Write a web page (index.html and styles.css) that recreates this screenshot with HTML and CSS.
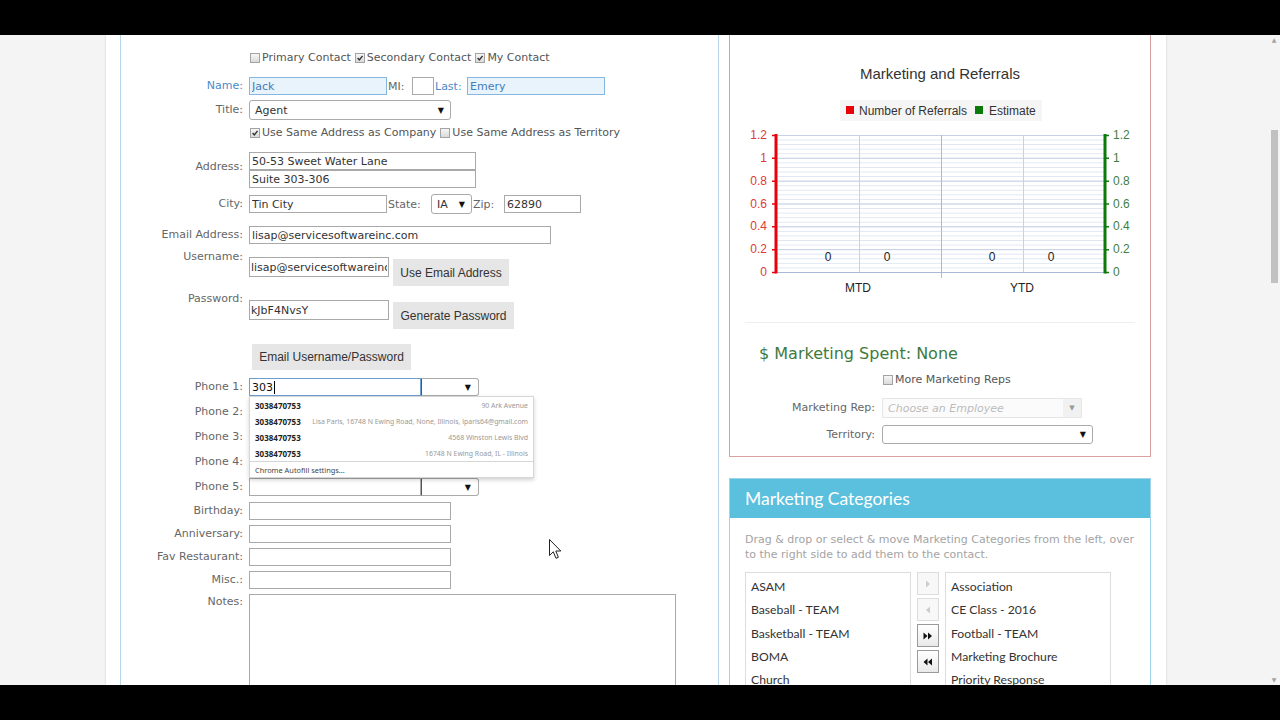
FILE: index.html
```html
<!DOCTYPE html>
<html lang="en">
<head>
    <meta charset="UTF-8">
    <meta name="viewport" content="width=device-width, initial-scale=1.0">
    <title>Edit Contact</title>
    <link rel="stylesheet" href="styles.css">
</head>
<body>
<div class="screen">
    <div class="page">
        <div class="container">
            <div class="columns">

                <!-- contact form -->
                <div class="contact-panel">
                    <div class="row">
                        <span class="lbl"></span>
                        <label class="chk"><span class="box"></span>Primary Contact</label>
                        <label class="chk"><span class="box"><svg viewBox="0 0 10 10"><path d="M2 5 L4.2 7.4 L8.2 2.4"/></svg></span>Secondary Contact</label>
                        <label class="chk"><span class="box"><svg viewBox="0 0 10 10"><path d="M2 5 L4.2 7.4 L8.2 2.4"/></svg></span>My Contact</label>
                    </div>
                    <div class="row gap12">
                        <span class="lbl blue">Name:</span>
                        <input class="inp inp-hl name-inp" value="Jack">
                        <span class="mi-lbl">MI:</span>
                        <input class="inp mi-inp" value="">
                        <span class="last-lbl blue">Last:</span>
                        <input class="inp inp-hl name-inp" value="Emery">
                    </div>
                    <div class="row gap5">
                        <span class="lbl">Title:</span>
                        <div class="sel title-sel"><span>Agent</span><span class="caret">▼</span></div>
                    </div>
                    <div class="row gap6">
                        <span class="lbl"></span>
                        <label class="chk"><span class="box"><svg viewBox="0 0 10 10"><path d="M2 5 L4.2 7.4 L8.2 2.4"/></svg></span>Use Same Address as Company</label>
                        <label class="chk"><span class="box"></span>Use Same Address as Territory</label>
                    </div>
                    <div class="row gap12">
                        <span class="lbl addr-lbl">Address:</span>
                        <div class="stack">
                            <input class="inp addr-inp" value="50-53 Sweet Water Lane">
                            <input class="inp addr-inp" value="Suite 303-306">
                        </div>
                    </div>
                    <div class="row gap6">
                        <span class="lbl">City:</span>
                        <input class="inp city-inp" value="Tin City">
                        <span class="state-lbl">State:</span>
                        <div class="sel state-sel"><span>IA</span><span class="caret">▼</span></div>
                        <span class="zip-lbl">Zip:</span>
                        <input class="inp zip-inp" value="62890">
                    </div>
                    <div class="row gap12">
                        <span class="lbl">Email Address:</span>
                        <input class="inp email-inp" value="lisap@servicesoftwareinc.com">
                    </div>
                    <div class="row top gap6">
                        <span class="lbl">Username:</span>
                        <input class="inp user-inp" value="lisap@servicesoftwareinc.com">
                        <button class="btn user-btn">Use Email Address</button>
                    </div>
                    <div class="row top gap6">
                        <span class="lbl">Password:</span>
                        <input class="inp user-inp pass-inp" value="kJbF4NvsY">
                        <button class="btn pass-btn">Generate Password</button>
                    </div>
                    <div class="row gap15">
                        <span class="lbl"></span>
                        <button class="btn send-btn">Email Username/Password</button>
                    </div>

                    <div class="row gap8">
                        <span class="lbl">Phone 1:</span>
                        <div class="phone-field">
                            <div class="inp phone-inp focused">303<span class="text-caret"></span></div>
                            <div class="sel phone-sel"><span class="caret">▼</span></div>
                            <div class="autofill">
                                <div class="af-item"><b>3038470753</b><span>90 Ark Avenue</span></div>
                                <div class="af-item"><b>3038470753</b><span>Lisa Paris, 16748 N Ewing Road, None, Illinois, lparis64@gmail.com</span></div>
                                <div class="af-item"><b>3038470753</b><span>4568 Winston Lewis Blvd</span></div>
                                <div class="af-item"><b>3038470753</b><span>16748 N Ewing Road, IL - Illinois</span></div>
                                <div class="af-settings">Chrome Autofill settings...</div>
                            </div>
                        </div>
                    </div>
                    <div class="row gap7">
                        <span class="lbl">Phone 2:</span>
                        <div class="phone-field">
                            <input class="inp phone-inp" value="">
                            <div class="sel phone-sel"></div>
                        </div>
                    </div>
                    <div class="row gap7">
                        <span class="lbl">Phone 3:</span>
                        <div class="phone-field">
                            <input class="inp phone-inp" value="">
                            <div class="sel phone-sel"></div>
                        </div>
                    </div>
                    <div class="row gap7">
                        <span class="lbl">Phone 4:</span>
                        <div class="phone-field">
                            <input class="inp phone-inp" value="">
                            <div class="sel phone-sel"></div>
                        </div>
                    </div>
                    <div class="row gap7">
                        <span class="lbl">Phone 5:</span>
                        <div class="phone-field">
                            <input class="inp phone-inp" value="">
                            <div class="sel phone-sel"><span class="caret">▼</span></div>
                        </div>
                    </div>

                    <div class="row gap6">
                        <span class="lbl">Birthday:</span>
                        <input class="inp misc-inp" value="">
                    </div>
                    <div class="row gap5">
                        <span class="lbl">Anniversary:</span>
                        <input class="inp misc-inp" value="">
                    </div>
                    <div class="row gap5">
                        <span class="lbl">Fav Restaurant:</span>
                        <input class="inp misc-inp" value="">
                    </div>
                    <div class="row gap5">
                        <span class="lbl">Misc.:</span>
                        <input class="inp misc-inp" value="">
                    </div>
                    <div class="row top gap5">
                        <span class="lbl notes-lbl">Notes:</span>
                        <textarea class="inp notes"></textarea>
                    </div>
                </div>

                <!-- right column -->
                <div class="side">
                    <div class="chart-panel">
                        <svg class="chart" width="420" height="265" viewBox="0 0 420 265">
                            <defs>
                                <pattern id="minor-grid" x="47" y="90" width="327" height="4.5667" patternUnits="userSpaceOnUse">
                                    <line x1="0" y1="0.5" x2="327" y2="0.5" stroke="#dfe6f2" stroke-width="1"/>
                                </pattern>
                            </defs>
                            <text x="210" y="34" text-anchor="middle" class="chart-title">Marketing and Referrals</text>

                            <rect x="110" y="55" width="202" height="21" fill="#f5f5f5"/>
                            <rect x="116" y="61" width="8" height="8" fill="#e8000b"/>
                            <text x="129" y="70" class="chart-txt">Number of Referrals</text>
                            <rect x="245" y="61" width="8" height="8" fill="#0b7a0b"/>
                            <text x="259" y="70" class="chart-txt">Estimate</text>

                            <rect x="47" y="90" width="327" height="137" fill="url(#minor-grid)"/>
                            <g stroke="#c6d1e6" stroke-width="1">
                                <line x1="47" y1="90.5" x2="374" y2="90.5"/>
                                <line x1="47" y1="113.3" x2="374" y2="113.3"/>
                                <line x1="47" y1="136.2" x2="374" y2="136.2"/>
                                <line x1="47" y1="159" x2="374" y2="159"/>
                                <line x1="47" y1="181.8" x2="374" y2="181.8"/>
                                <line x1="47" y1="204.7" x2="374" y2="204.7"/>
                                <line x1="129.5" y1="90" x2="129.5" y2="227"/>
                                <line x1="293.5" y1="90" x2="293.5" y2="227"/>
                            </g>
                            <g stroke="#a9b8d8" stroke-width="1">
                                <line x1="211.5" y1="90" x2="211.5" y2="233"/>
                                <line x1="47" y1="227.5" x2="374" y2="227.5"/>
                            </g>

                            <g stroke="#e8000b">
                                <line x1="46" y1="89" x2="46" y2="228.5" stroke-width="3"/>
                                <path d="M42 90.5h4M42 113.3h4M42 136.2h4M42 159h4M42 181.8h4M42 204.7h4M42 227.5h4" stroke-width="1.5"/>
                            </g>
                            <g stroke="#0b7a0b">
                                <line x1="375" y1="89" x2="375" y2="228.5" stroke-width="3"/>
                                <path d="M375 90.5h4M375 113.3h4M375 136.2h4M375 159h4M375 181.8h4M375 204.7h4M375 227.5h4" stroke-width="1.5"/>
                            </g>

                            <g class="axis-red" text-anchor="end">
                                <text x="37" y="94">1.2</text>
                                <text x="37" y="117">1</text>
                                <text x="37" y="140">0.8</text>
                                <text x="37" y="163">0.6</text>
                                <text x="37" y="185">0.4</text>
                                <text x="37" y="208">0.2</text>
                                <text x="37" y="231">0</text>
                            </g>
                            <g class="axis-green">
                                <text x="383" y="94">1.2</text>
                                <text x="383" y="117">1</text>
                                <text x="383" y="140">0.8</text>
                                <text x="383" y="163">0.6</text>
                                <text x="383" y="185">0.4</text>
                                <text x="383" y="208">0.2</text>
                                <text x="383" y="231">0</text>
                            </g>

                            <g class="chart-val" text-anchor="middle">
                                <text x="98" y="216">0</text>
                                <text x="157" y="216">0</text>
                                <text x="262" y="216">0</text>
                                <text x="321" y="216">0</text>
                                <text x="128" y="247">MTD</text>
                                <text x="292" y="247">YTD</text>
                            </g>
                        </svg>

                        <hr class="divider">
                        <div class="spent">$ Marketing Spent: None</div>

                        <div class="row rep-chk">
                            <span class="lbl side-lbl"></span>
                            <label class="chk"><span class="box"></span>More Marketing Reps</label>
                        </div>
                        <div class="row rep-row">
                            <span class="lbl side-lbl">Marketing Rep:</span>
                            <div class="sel rep-sel disabled"><span>Choose an Employee</span><span class="rep-arrow">▼</span></div>
                        </div>
                        <div class="row terr-row">
                            <span class="lbl side-lbl">Territory:</span>
                            <div class="sel terr-sel"><span></span><span class="caret">▼</span></div>
                        </div>
                    </div>

                    <div class="cat-panel">
                        <div class="cat-head">Marketing Categories</div>
                        <div class="cat-body">
                            <p class="cat-help">Drag &amp; drop or select &amp; move Marketing Categories from the left, over to the right side to add them to the contact.</p>
                            <div class="picker">
                                <div class="list">
                                    <div>ASAM</div>
                                    <div>Baseball - TEAM</div>
                                    <div>Basketball - TEAM</div>
                                    <div>BOMA</div>
                                    <div>Church</div>
                                </div>
                                <div class="mv-btns">
                                    <span class="mv"><svg width="6" height="8" viewBox="0 0 6 8"><path d="M1 0.5 L5 4 L1 7.5Z"/></svg></span>
                                    <span class="mv"><svg width="6" height="8" viewBox="0 0 6 8"><path d="M5 0.5 L1 4 L5 7.5Z"/></svg></span>
                                    <span class="mv on"><svg width="10" height="8" viewBox="0 0 10 8"><path d="M0.5 0.5 L4.5 4 L0.5 7.5Z M5 0.5 L9 4 L5 7.5Z"/></svg></span>
                                    <span class="mv on"><svg width="10" height="8" viewBox="0 0 10 8"><path d="M4.5 0.5 L0.5 4 L4.5 7.5Z M9 0.5 L5 4 L9 7.5Z"/></svg></span>
                                </div>
                                <div class="list">
                                    <div>Association</div>
                                    <div>CE Class - 2016</div>
                                    <div>Football - TEAM</div>
                                    <div>Marketing Brochure</div>
                                    <div>Priority Response</div>
                                </div>
                            </div>
                        </div>
                    </div>
                </div>

            </div>
        </div>
    </div>
    <div class="scrollbar">
        <span class="sb-arrow">▲</span>
        <span class="sb-thumb"></span>
        <span class="sb-fill"></span>
        <span class="sb-arrow">▼</span>
    </div>
    <svg class="cursor" width="13" height="21" viewBox="0 0 13 21"><path d="M0.5 0.5 L0.5 16.5 L4.3 12.8 L7 19.3 L9.4 18.3 L6.8 12 L11.8 12 Z" fill="#fff" stroke="#222" stroke-width="1"/></svg>
</div>
</body>
</html>
```

FILE: styles.css
```css
body {
    margin: 0;
    background-color: #000;
    font-family: "DejaVu Sans", Verdana, sans-serif;
    font-size: 11px;
    color: #666;
}
.screen {
    margin-top: 35px;
    height: 650px;
    display: flex;
    background-color: #f4f4f4;
    overflow: hidden;
    position: relative;
}
.page {
    flex: 1;
    overflow: hidden;
}
.container {
    display: flow-root;
    width: 1060px;
    height: 100%;
    margin-left: 106px;
    padding: 0 15px 0 14px;
    box-sizing: border-box;
    background-color: #fff;
    box-shadow: 0 0 2px rgba(0, 0, 0, 0.18);
}
.columns {
    display: flex;
    align-items: flex-start;
    gap: 10px;
    margin-top: -20px;
}

/* left form */
.contact-panel {
    width: 599px;
    height: 820px;
    box-sizing: border-box;
    border: 1px solid #b7d6ec;
    padding-top: 35px;
}
.row {
    display: flex;
    align-items: center;
}
.row.top {
    align-items: flex-start;
}
.gap5 { margin-top: 5px; }
.gap6 { margin-top: 6px; }
.gap7 { margin-top: 7px; }
.gap8 { margin-top: 8px; }
.gap12 { margin-top: 12px; }
.gap15 { margin-top: 15px; }
.lbl {
    flex: none;
    width: 122px;
    margin-right: 6px;
    text-align: right;
    line-height: 14px;
}
.blue {
    color: #4a8bc9;
}
.addr-lbl {
    padding-bottom: 6px;
}
.notes-lbl {
    margin-top: 1px;
}
.chk {
    display: inline-flex;
    align-items: center;
    line-height: 14px;
    color: #555;
    margin-right: 4px;
}
.chk:first-of-type {
    margin-left: 1px;
}
.box {
    width: 10px;
    height: 10px;
    box-sizing: border-box;
    border: 1px solid #a3a3a3;
    background: linear-gradient(#f6f6f6, #dadada);
    margin-right: 2px;
    display: inline-flex;
}
.box svg {
    width: 8px;
    height: 8px;
    fill: none;
    stroke: #333;
    stroke-width: 1.8;
}
.inp {
    height: 18px;
    margin: 0;
    padding: 0 2px;
    box-sizing: border-box;
    border: 1px solid #a9a9a9;
    background-color: #fff;
    font-family: inherit;
    font-size: 11px;
    color: #333;
    outline: none;
}
.inp-hl {
    background-color: #e9f3fc;
    border-color: #86b7e0;
    color: #3f7dbd;
}
.name-inp { width: 138px; }
.mi-lbl {
    width: 24px;
    margin-left: 1px;
}
.mi-inp { width: 22px; }
.last-lbl {
    width: 32px;
    padding-left: 1px;
}
.addr-inp { width: 227px; }
.stack {
    display: flex;
    flex-direction: column;
}
.city-inp { width: 138px; }
.state-lbl {
    width: 43px;
    margin-left: 1px;
}
.zip-lbl {
    width: 31px;
    margin-left: 1px;
}
.zip-inp { width: 77px; }
.email-inp { width: 302px; }
.user-inp {
    width: 140px;
    height: 20px;
    margin-top: 7px;
    padding: 0 1px;
}
.pass-inp {
    margin-top: 8px;
}
.sel {
    display: flex;
    align-items: center;
    justify-content: space-between;
    height: 20px;
    box-sizing: border-box;
    border: 1px solid #aaa;
    border-radius: 3px;
    padding: 0 6px 0 5px;
    background-color: #fff;
    color: #333;
}
.caret {
    font-size: 8px;
    color: #111;
}
.title-sel { width: 202px; }
.state-sel { width: 41px; }

.btn {
    font-family: "Liberation Sans", Arial, sans-serif;
    font-size: 12px;
    color: #333;
    background-color: #e6e6e6;
    border: none;
    height: 27px;
    padding: 0 7px;
    margin: 0;
}
.user-btn {
    margin: 9px 0 0 4px;
    width: 116px;
}
.pass-btn {
    margin: 10px 0 0 4px;
    width: 121px;
}
.send-btn {
    height: 26px;
    width: 159px;
    margin-left: 3px;
}

.phone-field {
    display: flex;
    position: relative;
}
.phone-inp {
    width: 172px;
    display: flex;
    align-items: center;
}
.focused {
    border-color: #6d9fd3;
    color: #111;
}
.text-caret {
    width: 1px;
    height: 13px;
    background-color: #000;
    margin-left: 1px;
}
.phone-sel {
    width: 58px;
    height: 18px;
    border-radius: 0 3px 3px 0;
    border-left-color: #555;
    justify-content: flex-end;
    padding-right: 7px;
}
.autofill {
    position: absolute;
    top: 18px;
    left: 0;
    width: 285px;
    height: 82px;
    box-sizing: border-box;
    background-color: #fff;
    border: 1px solid #d6d6d6;
    box-shadow: 0 2px 4px rgba(0, 0, 0, 0.18);
    font-family: "Noto Sans", sans-serif;
    z-index: 10;
}
.af-item {
    height: 16px;
    display: flex;
    align-items: center;
    justify-content: space-between;
    padding: 0 5px;
}
.af-item b {
    font-size: 8px;
    color: #222;
}
.af-item span {
    font-size: 6.9px;
    color: #999;
}
.af-settings {
    border-top: 1px solid #d6d6d6;
    height: 16px;
    line-height: 16px;
    padding: 0 5px;
    font-size: 7.4px;
    color: #444;
}
.misc-inp { width: 202px; }
.notes {
    width: 427px;
    height: 130px;
    resize: none;
}

/* right column */
.side {
    width: 422px;
    display: flex;
    flex-direction: column;
    gap: 21px;
}
.chart-panel {
    height: 442px;
    box-sizing: border-box;
    border: 1px solid #d9a2a2;
    padding-top: 29px;
}
.chart {
    display: block;
}
.chart-title {
    font-family: "Liberation Sans", Arial, sans-serif;
    font-size: 15px;
    fill: #333;
}
.chart-txt,
.chart-val {
    font-family: "Liberation Sans", Arial, sans-serif;
    font-size: 12px;
    fill: #333;
}
.chart-val {
    fill: #222;
}
.axis-red {
    font-family: "Liberation Sans", Arial, sans-serif;
    font-size: 12px;
    fill: #dd3a3a;
}
.axis-green {
    font-family: "Liberation Sans", Arial, sans-serif;
    font-size: 12px;
    fill: #3f7f3f;
}
.divider {
    margin: 12px 15px 0;
    border: none;
    border-top: 1px solid #eee;
}
.spent {
    margin-top: 21px;
    padding-left: 29px;
    font-size: 16px;
    line-height: 20px;
    color: #3e7a3e;
}
.side-lbl {
    width: 145px;
    margin-right: 7px;
}
.rep-chk {
    margin-top: 9px;
}
.rep-row {
    margin-top: 11px;
}
.terr-row {
    margin-top: 7px;
}
.rep-sel {
    width: 200px;
    padding-right: 0;
    background-color: #fbfbfb;
    border-color: #e6e6e6;
    border-radius: 0;
    color: #bbb;
    font-style: italic;
}
.rep-arrow {
    width: 18px;
    height: 18px;
    line-height: 18px;
    text-align: center;
    font-style: normal;
    font-size: 7px;
    color: #999;
    background-color: #f1f1f1;
}
.terr-sel {
    width: 211px;
    height: 19px;
}

.cat-panel {
    border: 1px solid #9fd3ea;
    height: 300px;
}
.cat-head {
    height: 39px;
    line-height: 39px;
    padding-left: 15px;
    background-color: #5bc0de;
    color: #fff;
    font-family: Lato, "Open Sans", sans-serif;
    font-size: 17.5px;
}
.cat-body {
    padding: 14px 15px;
}
.cat-help {
    margin: 0;
    line-height: 15px;
    color: #a4a4a4;
}
.picker {
    display: flex;
    align-items: flex-start;
    margin-top: 10px;
}
.list {
    width: 166px;
    height: 180px;
    box-sizing: border-box;
    border: 1px solid #ddd;
    padding-top: 2px;
    font-family: Lato, "Open Sans", sans-serif;
    font-size: 12.2px;
    color: #333;
    overflow: hidden;
}
.list div {
    line-height: 23.3px;
    padding-left: 5px;
}
.mv-btns {
    display: flex;
    flex-direction: column;
    gap: 3px;
    margin: 0 6px;
}
.mv {
    width: 22px;
    height: 23px;
    box-sizing: border-box;
    border: 1px solid #ddd;
    background-color: #f8f8f8;
    display: flex;
    align-items: center;
    justify-content: center;
    fill: #ccc;
}
.mv.on {
    border-color: #9a9a9a;
    background: linear-gradient(#fff, #e9e9e9);
    fill: #111;
}

/* browser chrome */
.scrollbar {
    width: 12px;
    display: flex;
    flex-direction: column;
    align-items: center;
    background-color: #f4f4f4;
}
.sb-arrow {
    font-size: 6px;
    color: #a3a3a3;
    line-height: 10px;
}
.sb-thumb {
    margin-top: 85px;
    width: 7px;
    height: 153px;
    background-color: #c1c1c1;
}
.sb-fill {
    flex: 1;
}
.cursor {
    position: absolute;
    left: 549px;
    top: 504px;
}
```
